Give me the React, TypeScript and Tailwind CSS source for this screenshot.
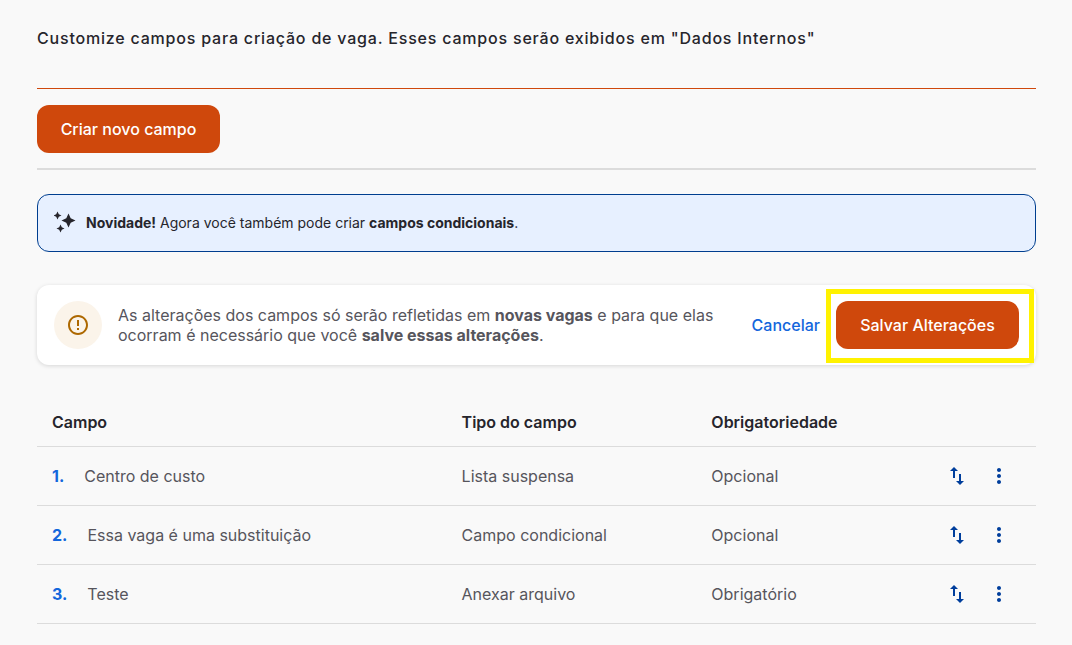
import { MdErrorOutline, MdMoreVert, MdSwapVert } from "react-icons/md";

type Field = { name: string; type: string; requirement: string };

const fields: Field[] = [
  { name: "Centro de custo", type: "Lista suspensa", requirement: "Opcional" },
  { name: "Essa vaga é uma substituição", type: "Campo condicional", requirement: "Opcional" },
  { name: "Teste", type: "Anexar arquivo", requirement: "Obrigatório" },
];

function SparklesIcon() {
  return (
    <svg viewBox="0 0 24 24" className="size-6 shrink-0 fill-[#26252c]" aria-hidden="true">
      <path d="M14.5 2.5 16.7 7.3 21.5 9.5 16.7 11.7 14.5 16.5 12.3 11.7 7.5 9.5 12.3 7.3Z" />
      <path d="M3.5 .5 4.8 3.2 7.5 4.5 4.8 5.8 3.5 8.5 2.2 5.8-.5 4.5 2.2 3.2Z" />
      <path d="M6.5 13.5 7.8 16.2 10.5 17.5 7.8 18.8 6.5 21.5 5.2 18.8 2.5 17.5 5.2 16.2Z" />
    </svg>
  );
}

function PrimaryButton({ children }: { children: string }) {
  return (
    <button type="button" className="h-12 w-[183px] shrink-0 rounded-xl bg-[#cf480c] font-medium text-white">
      {children}
    </button>
  );
}

export default function App() {
  return (
    <main className="min-h-screen bg-[#f9f9f9] pt-[26px] pr-9 pb-5 pl-[37px] font-['Inter',sans-serif] text-base text-[#56555c]">
      <h1 className="text-base leading-6 font-medium tracking-wider text-[#26252c]">
        Customize campos para criação de vaga. Esses campos serão exibidos em "Dados Internos"
      </h1>

      <div className="mt-[38px] flex border-t border-[#cf480c] border-b-2 border-b-[#dcdcdc] pt-4 pb-[15px]">
        <PrimaryButton>Criar novo campo</PrimaryButton>
      </div>

      <section className="mt-6 flex h-[58px] items-center gap-2 rounded-xl border border-[#003e8f] bg-[#e7f0ff] px-4 text-sm text-[#26252c]">
        <SparklesIcon />
        <p>
          <strong className="font-bold">Novidade!</strong> Agora você também pode criar{" "}
          <strong className="font-bold">campos condicionais</strong>.
        </p>
      </section>

      <section className="mt-[33px] flex items-center rounded-xl bg-white px-[17px] py-4 shadow-[0_1px_4px_rgba(0,0,0,0.14)]">
        <span className="flex size-12 shrink-0 items-center justify-center rounded-full bg-[#fbf4ea]">
          <MdErrorOutline className="size-6 text-[#ad6800]" />
        </span>
        <p className="ml-4 flex-1 leading-5">
          As alterações dos campos só serão refletidas em <strong className="font-bold">novas vagas</strong> e para que
          elas ocorram é necessário que você <strong className="font-bold">salve essas alterações</strong>.
        </p>
        <button type="button" className="mx-4 font-medium text-[#1366dc]">
          Cancelar
        </button>
        <div className="relative">
          <PrimaryButton>Salvar Alterações</PrimaryButton>
          <span className="pointer-events-none absolute -top-3 -right-[15px] -bottom-[14px] -left-[10px] border-5 border-[#fff200]" />
        </div>
      </section>

      <table className="mt-8 w-full table-fixed text-left">
        <colgroup>
          <col className="w-[41%]" />
          <col className="w-[25%]" />
          <col />
          <col className="w-[108px]" />
        </colgroup>
        <thead className="text-[#26252c]">
          <tr className="h-[49px] border-b border-[#dcdcdc]">
            <th scope="col" className="pt-0.5 pl-[15px] font-semibold">Campo</th>
            <th scope="col" className="pt-0.5 pl-[15px] font-semibold">Tipo do campo</th>
            <th scope="col" className="pt-0.5 pl-[15px] font-semibold">Obrigatoriedade</th>
            <th scope="col" aria-label="Ações" />
          </tr>
        </thead>
        <tbody>
          {fields.map((field, index) => (
            <tr key={field.name} className="h-[59px] border-b border-[#dcdcdc]">
              <td className="pl-[15px]">
                <span className="mr-5 font-bold text-[#1366dc]">{index + 1}.</span>
                {field.name}
              </td>
              <td className="pl-[15px]">{field.type}</td>
              <td className="pl-[15px]">{field.requirement}</td>
              <td>
                <div className="flex justify-end gap-[18px] pr-[25px] text-[#003e9c]">
                  <button type="button" aria-label={`Reordenar ${field.name}`}>
                    <MdSwapVert className="size-6" />
                  </button>
                  <button type="button" aria-label={`Mais opções de ${field.name}`}>
                    <MdMoreVert className="size-6" />
                  </button>
                </div>
              </td>
            </tr>
          ))}
        </tbody>
      </table>
    </main>
  );
}
